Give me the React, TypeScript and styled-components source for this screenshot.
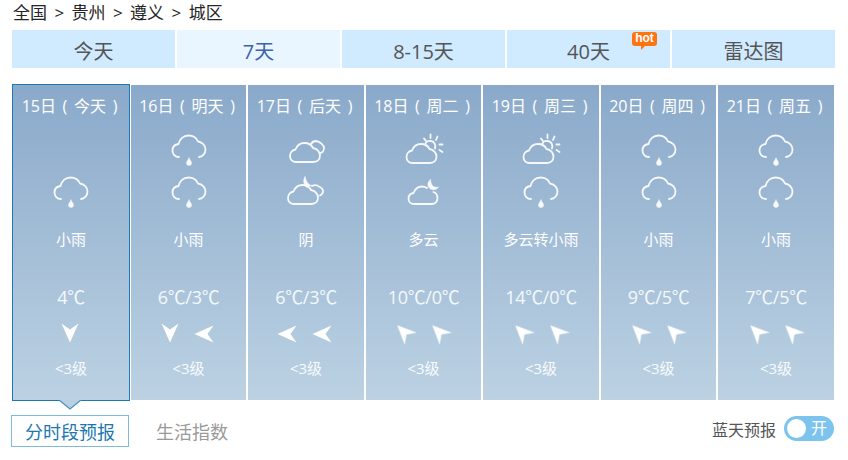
import React from "react";
import styled, { createGlobalStyle } from "styled-components";

const GlobalStyle = createGlobalStyle`
  body {
    margin: 0;
    background: #fff;
    font-family: "Open Sans", "Noto Sans CJK SC", sans-serif;
  }
`;

const Page = styled.div`
  width: 848px;
  height: 460px;
  overflow: hidden;
  position: relative;
`;

const Crumbs = styled.div`
  height: 30px;
  line-height: 25px;
  padding-left: 13px;
  font-size: 17px;
  color: #252525;
  word-spacing: 3px;
`;

const Tabs = styled.ul`
  list-style: none;
  margin: 0 0 0 12px;
  padding: 0;
  width: 823px;
  display: grid;
  grid-template-columns: repeat(5, 163px);
  gap: 2px;
`;

const Tab = styled.li<{ $active?: boolean }>`
  position: relative;
  height: 38px;
  line-height: 43px;
  text-align: center;
  font-size: 20px;
  background: ${(props) => (props.$active ? "#eaf6ff" : "#d0eaff")};
  color: ${(props) => (props.$active ? "#3d62ad" : "#555")};
`;

const HotBadge = styled.span`
  position: absolute;
  top: 2px;
  right: 13px;
  width: 25px;
  height: 14px;
  border-radius: 3px;
  background: #ff7412;
  color: #fff;
  font: bold 12px/13px "Liberation Sans", sans-serif;
  text-align: center;
  &::after {
    content: "";
    position: absolute;
    left: 9px;
    top: 14px;
    border-style: solid;
    border-width: 4px 4px 0 0;
    border-color: #ff7412 transparent transparent transparent;
  }
`;

const Days = styled.ul`
  list-style: none;
  margin: 17px 0 0 12px;
  padding: 0;
  display: grid;
  grid-template-columns: 117px 115px 116px 115px 116px 115px 116px;
  column-gap: 2px;
  width: 823px;
`;

const Day = styled.li<{ $today?: boolean }>`
  position: relative;
  box-sizing: border-box;
  height: ${(props) => (props.$today ? "317px" : "315px")};
  margin: ${(props) => (props.$today ? "-1px -1px -1px 0" : "0")};
  border: ${(props) => (props.$today ? "1px solid #1b7ab4" : "none")};
  background: linear-gradient(#8aa9ca, #bcd2e3);
  color: #fff;
  text-align: center;
`;

const Caret = styled.svg`
  position: absolute;
  left: 45px;
  top: 315px;
  display: block;
`;

const DateLabel = styled.div`
  height: 44px;
  line-height: 42px;
  font-size: 16px;
  word-spacing: 2.5px;
  padding-right: 3px;
  box-sizing: border-box;
  white-space: nowrap;
`;

const IconStack = styled.div`
  height: 84px;
  display: flex;
  flex-direction: column;
  justify-content: flex-end;
  align-items: center;
`;

const IconSlot = styled.div`
  height: 42px;
  display: flex;
  align-items: center;
`;

const Desc = styled.div`
  height: 52px;
  line-height: 52px;
  font-size: 15px;
`;

const Temp = styled.div`
  margin-top: 15px;
  height: 34px;
  line-height: 34px;
  font-size: 18px;
  letter-spacing: -0.3px;
  color: #f4f9fd;
`;

const WindRow = styled.div`
  height: 40px;
  display: flex;
  justify-content: center;
  align-items: center;
  gap: 15px;
`;

const nudge: Record<number, string> = {
  180: "translate(-1px, -1px)",
  [-90]: "translate(-2px, 0)",
  [-45]: "translate(-2px, -2px)",
};

const WindArrow = styled.svg<{ $angle: number }>`
  display: block;
  transform: ${(props) => nudge[props.$angle]} rotate(${(props) => props.$angle}deg);
  filter: blur(0.6px);
`;

const Level = styled.div`
  height: 28px;
  line-height: 28px;
  font-size: 15px;
  color: #f8fbfe;
`;

const Footer = styled.div`
  display: flex;
  align-items: flex-start;
  margin-top: 15px;
  padding: 0 14px 0 11px;
`;

const SubTab = styled.div<{ $active?: boolean }>`
  box-sizing: border-box;
  height: 32px;
  line-height: 32px;
  text-align: center;
  font-size: 18px;
  white-space: nowrap;
  border: 1px solid ${(props) => (props.$active ? "#7fb9dc" : "transparent")};
  color: ${(props) => (props.$active ? "#1b77b0" : "#999")};
  width: ${(props) => (props.$active ? "118px" : "74px")};
  margin-right: ${(props) => (props.$active ? "26px" : "0")};
`;

const SkySwitch = styled.div`
  margin-left: auto;
  display: flex;
  align-items: center;
  gap: 8px;
  font-size: 16px;
  color: #555;
  height: 27px;
`;

const Toggle = styled.div`
  position: relative;
  box-sizing: border-box;
  width: 50px;
  height: 25px;
  border-radius: 13px;
  background: #7cc4ee;
  color: #fff;
  line-height: 25px;
  padding-left: 27px;
  font-size: 16px;
  &::before {
    content: "";
    position: absolute;
    left: 3px;
    top: 3px;
    width: 19px;
    height: 19px;
    border-radius: 50%;
    background: #fff;
  }
`;

type IconKind = "rain" | "overcast" | "overcastNight" | "sun" | "moon";

const cloud =
  "M9 29C5.5 29 3 26.5 3 23C3 19.5 5.5 17 8.5 16.5C10 12.5 13.5 10 17.5 10C21 10 24.5 12 26 15C30 15.5 33 19 33 22.5C33 26.5 30 29 26 29Z";

function WeatherIcon({ kind }: { kind: IconKind }) {
  return (
    <svg
      width="40"
      height="34"
      viewBox="0 0 40 34"
      fill="none"
      stroke="#fff"
      strokeWidth="1.8"
      strokeLinecap="round"
      strokeLinejoin="round"
      opacity="0.92"
    >
      {kind === "rain" && (
        <>
          <path d="M10 24C6 24 3.5 21 3.5 17.5C3.5 14 6 11.5 9.5 11C10.5 6 14.5 2.5 19.5 2.5C24 2.5 27.5 5 29 8.5C33 9 36.5 12.5 36.5 16.5C36.5 21 33 24 30 24" />
          <path
            d="M20 25C19 27 17.5 28.5 17.5 30A2.5 2.5 0 0 0 22.5 30C22.5 28.5 21 27 20 25Z"
            fill="#fff"
            strokeWidth="0.5"
          />
        </>
      )}
      {kind === "overcast" && (
        <>
          <path d={cloud} transform="translate(1 0)" />
          <path d="M25 11C26 9 28 8 30 8C34 8.5 38 12 38 15C38 18 36 20 34 20" />
        </>
      )}
      {kind === "overcastNight" && (
        <>
          <path d={cloud} transform="translate(-1 0)" />
          <path d="M26 11C28 10 31 10 33 11.5C36 13 37.5 15 37 17C36.5 19 35.5 20 34 20.5" />
          <path
            d="M19 2C17 5 17.5 9.5 21 12.5C22.5 11 24 10.5 25.5 10.5C22.5 10 20 6.5 19 2Z"
            fill="#fff"
            strokeWidth="0.8"
          />
        </>
      )}
      {kind === "sun" && (
        <>
          <path d={cloud} transform="translate(-0.5 1)" />
          <path d="M21.5 10.5C22 8.5 24.5 7.5 27 8C30.5 8.5 32 12 31 15.5" />
          <path d="M26.5 1.5V5M33.5 3.5L32 7M38.5 11.5H35.5M38.5 19L35.5 17M20 5.5L22 8" />
        </>
      )}
      {kind === "moon" && (
        <>
          <path d="M23 13C21.5 12 20 11.5 18 11.5C14.5 11.5 11 14 9.5 18C7 18.5 4.5 20.5 4.5 23.5C4.5 26.5 6.5 29 10 29H28C31 29 33.5 26.5 33.5 23C33.5 20.5 32 18 29.5 17" />
          <path
            d="M26.5 4.5C22.5 8 23 13 28 14.5C30.5 15 33 14.5 34.5 12C31 13 28.5 11.5 27.5 9C27 7.5 26.5 6.5 26.5 4.5Z"
            fill="#fff"
            strokeWidth="0.6"
          />
        </>
      )}
    </svg>
  );
}

const ArrowShape = ({ angle }: { angle: number }) => (
  <WindArrow $angle={angle} width="20" height="22" viewBox="0 0 20 22">
    <path d="M10 1.5L18.5 20.5L10 14.5L1.5 20.5Z" fill="#fff" />
  </WindArrow>
);

interface IDay {
  date: string;
  icons: IconKind[];
  desc: string;
  temp: string;
  wind: number[];
  today?: boolean;
}

const DOWN = 180;
const LEFT = -90;
const NW = -45;

const days: IDay[] = [
  { date: "15日 ( 今天 )", icons: ["rain"], desc: "小雨", temp: "4℃", wind: [DOWN], today: true },
  { date: "16日 ( 明天 )", icons: ["rain", "rain"], desc: "小雨", temp: "6℃/3℃", wind: [DOWN, LEFT] },
  { date: "17日 ( 后天 )", icons: ["overcast", "overcastNight"], desc: "阴", temp: "6℃/3℃", wind: [LEFT, LEFT] },
  { date: "18日 ( 周二 )", icons: ["sun", "moon"], desc: "多云", temp: "10℃/0℃", wind: [NW, NW] },
  { date: "19日 ( 周三 )", icons: ["sun", "rain"], desc: "多云转小雨", temp: "14℃/0℃", wind: [NW, NW] },
  { date: "20日 ( 周四 )", icons: ["rain", "rain"], desc: "小雨", temp: "9℃/5℃", wind: [NW, NW] },
  { date: "21日 ( 周五 )", icons: ["rain", "rain"], desc: "小雨", temp: "7℃/5℃", wind: [NW, NW] },
];

function App() {
  return (
    <Page>
      <GlobalStyle />
      <Crumbs>全国 &gt; 贵州 &gt; 遵义 &gt; 城区</Crumbs>
      <Tabs>
        <Tab>今天</Tab>
        <Tab $active>7天</Tab>
        <Tab>8-15天</Tab>
        <Tab>
          40天
          <HotBadge>hot</HotBadge>
        </Tab>
        <Tab>雷达图</Tab>
      </Tabs>
      <Days>
        {days.map((day) => (
          <Day key={day.date} $today={day.today}>
            <DateLabel>{day.date}</DateLabel>
            <IconStack>
              {day.icons.map((kind, index) => (
                <IconSlot key={index}>
                  <WeatherIcon kind={kind} />
                </IconSlot>
              ))}
            </IconStack>
            <Desc>{day.desc}</Desc>
            <Temp>{day.temp}</Temp>
            <WindRow>
              {day.wind.map((angle, index) => (
                <ArrowShape key={index} angle={angle} />
              ))}
            </WindRow>
            <Level>&lt;3级</Level>
            {day.today && (
              <Caret width="24" height="10" viewBox="0 0 24 10">
                <path d="M1 0L12 9L23 0Z" fill="#b7cfe0" />
                <path d="M1 0L12 9L23 0" fill="none" stroke="#4d8fb8" strokeWidth="1.2" />
              </Caret>
            )}
          </Day>
        ))}
      </Days>
      <Footer>
        <SubTab $active>分时段预报</SubTab>
        <SubTab>生活指数</SubTab>
        <SkySwitch>
          蓝天预报
          <Toggle>开</Toggle>
        </SkySwitch>
      </Footer>
    </Page>
  );
}

export default App;
